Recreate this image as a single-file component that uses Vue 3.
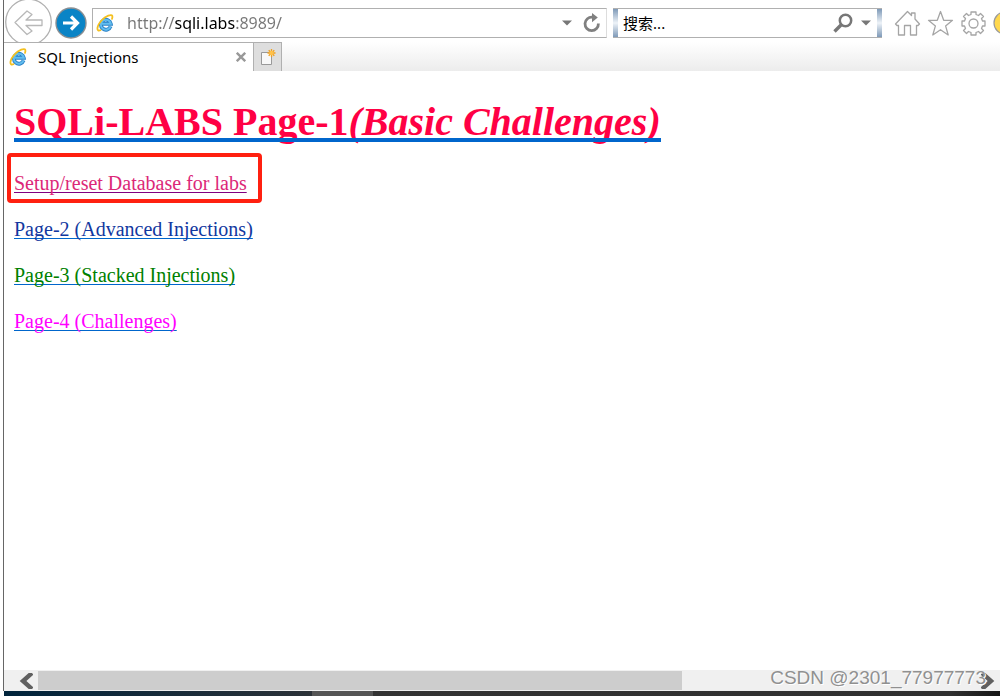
<template>
  <div class="browser">
    <header class="toolbar">
      <button class="nav nav--back" type="button" aria-label="Back">
        <svg width="48" height="48" viewBox="0 0 48 48">
          <circle cx="24.5" cy="23" r="22.8" fill="#fff" stroke="#b0b0b0" stroke-width="1.3" />
          <path
            d="M11 23.5 L23 12 L28 15.5 L22 21 H38 V26.5 H22 L28 32 L23 35.5 Z"
            fill="#fff"
            stroke="#b8b8b8"
            stroke-width="1.3"
            stroke-linejoin="round"
          />
        </svg>
      </button>
      <button class="nav" type="button" aria-label="Forward">
        <svg width="32" height="32" viewBox="0 0 32 32">
          <circle cx="16" cy="16" r="15" fill="#0a84c6" stroke="#8a8f93" stroke-width="1.4" />
          <path d="M8 16 H22 M16 9.5 L22.5 16 L16 22.5" fill="none" stroke="#fff" stroke-width="3.2" />
        </svg>
      </button>

      <form class="address" @submit.prevent>
        <svg class="ie" width="18" height="18" viewBox="0 0 18 18">
          <path :d="ie.letter" fill="none" stroke="#2a82c8" stroke-width="3.8" />
          <path :d="ie.letter" fill="none" stroke="#62bdee" stroke-width="2" />
          <path :d="ie.ring" fill="none" stroke="#f4c020" stroke-width="1.8" stroke-linecap="round" />
        </svg>
        <input v-model="url" class="address__input" type="text" aria-label="Address" />
        <button class="tool" type="button" aria-label="Show address history">
          <svg width="10" height="6" viewBox="0 0 10 6"><path d="M0 0.5 H10 L5 5.5 Z" fill="#777" /></svg>
        </button>
        <button class="tool tool--refresh" type="button" aria-label="Refresh">
          <svg width="18" height="20" viewBox="0 0 18 20">
            <path d="M15.4 10.5 A6.7 6.7 0 1 1 9.5 4.2" fill="none" stroke="#808080" stroke-width="2.8" />
            <path d="M9 0 L14.8 4.6 L9 9.2 Z" fill="#808080" />
          </svg>
        </button>
      </form>

      <form class="search" @submit.prevent>
        <input v-model="query" class="search__input" type="text" placeholder="搜索..." aria-label="搜索" />
        <button class="tool" type="submit" aria-label="Search">
          <svg width="20" height="20" viewBox="0 0 20 20">
            <circle cx="12.5" cy="7.5" r="5.7" fill="none" stroke="#777" stroke-width="2.5" />
            <path d="M8.5 11.5 L1.5 18.5" stroke="#777" stroke-width="3.4" />
          </svg>
        </button>
        <button class="tool tool--engines" type="button" aria-label="Search providers">
          <svg width="10" height="6" viewBox="0 0 10 6"><path d="M0 0.5 H10 L5 5.5 Z" fill="#777" /></svg>
        </button>
      </form>

      <nav class="commands">
        <button v-for="icon in icons" :key="icon.name" class="tool" type="button" :aria-label="icon.name">
          <svg width="27" height="27" viewBox="0 0 27 27">
            <path :d="icon.path" fill="#fff" stroke="#a5a5a5" stroke-width="1.3" stroke-linejoin="round" />
          </svg>
        </button>
        <button class="tool" type="button" aria-label="Feedback">
          <svg width="24" height="24" viewBox="0 0 24 24">
            <circle cx="12" cy="12" r="11" fill="#ffd84e" stroke="#9a9a9a" stroke-width="1.2" />
          </svg>
        </button>
      </nav>
    </header>

    <div class="tabs">
      <div class="tab">
        <svg class="ie" width="18" height="18" viewBox="0 0 18 18">
          <path :d="ie.letter" fill="none" stroke="#2a82c8" stroke-width="3.8" />
          <path :d="ie.letter" fill="none" stroke="#62bdee" stroke-width="2" />
          <path :d="ie.ring" fill="none" stroke="#f4c020" stroke-width="1.8" stroke-linecap="round" />
        </svg>
        <span class="tab__title">SQL Injections</span>
        <button class="tool" type="button" aria-label="Close tab">
          <svg width="10" height="10" viewBox="0 0 10 10">
            <path d="M0.8 0.8 L9.2 9.2 M9.2 0.8 L0.8 9.2" stroke="#999" stroke-width="2.4" />
          </svg>
        </button>
      </div>
      <button class="new-tab" type="button" aria-label="New tab">
        <svg width="16" height="16" viewBox="0 0 16 16">
          <path d="M1.5 3.5 H11.5 V15.5 H1.5 Z" fill="#f8f8f8" stroke="#999" />
          <path
            d="M11.5 0 V8 M7.5 4 H15.5 M8.7 1.2 L14.3 6.8 M14.3 1.2 L8.7 6.8"
            stroke="#f0a020"
            stroke-width="1.3"
          />
          <circle cx="11.5" cy="4" r="2.2" fill="#ffc14a" />
        </svg>
      </button>
    </div>

    <main class="page">
      <h1 class="page__heading">
        <a class="page__title" href="#">SQLi-LABS Page-1<i>(Basic Challenges)</i></a>
      </h1>
      <ul class="links">
        <li v-for="link in links" :key="link.tone" class="links__item" :class="{ 'links__item--marked': link.marked }">
          <a class="link" :class="`link--${link.tone}`" href="#">{{ link.label }}</a>
        </li>
      </ul>
    </main>

    <div class="scrollbar">
      <button class="scrollbar__arrow" type="button" aria-label="Scroll left">
        <svg width="14" height="16" viewBox="0 0 14 16">
          <path d="M13 0 L4 8 L13 16" fill="none" stroke="#606060" stroke-width="4.4" />
        </svg>
      </button>
      <div class="scrollbar__track">
        <div class="scrollbar__thumb" :style="{ width: `${thumb}%` }"></div>
      </div>
      <button class="scrollbar__arrow scrollbar__arrow--right" type="button" aria-label="Scroll right">
        <svg width="14" height="16" viewBox="0 0 14 16">
          <path d="M1 0 L10 8 L1 16" fill="none" stroke="#606060" stroke-width="4.4" />
        </svg>
      </button>
      <span class="watermark">CSDN @2301_77977773</span>
    </div>
    <div class="taskbar"></div>
  </div>
</template>

<script setup>
import { computed, ref } from 'vue'

const url = ref('http://sqli.labs:8989/')
const query = ref('')

const view = ref({ visible: 996, content: 1436 })
const thumb = computed(() => (view.value.visible / view.value.content) * 100)

const ie = {
  letter: 'M14.6 12.4 A5 5 0 1 1 14.8 9.8 H6',
  ring: 'M4.5 16.2 C0 18 0.5 12 5.5 6.5 C10 1.8 15.5 -0.2 16.3 1.8 C16.6 2.8 16.4 3.8 16 4.8',
}

const icons = [
  {
    name: 'Home',
    path: 'M1.5 14 L13.5 1.5 L17.5 5.5 V3 H21 V9 L25.5 14 L24 15.5 H22.5 V25 H16.5 V15.5 H10.5 V25 H4.5 V15.5 H3 Z',
  },
  {
    name: 'Favorites',
    path: 'M13.5 1.5 L16.7 10.3 H25.5 L18.6 15.9 L21.2 25 L13.5 19.7 L5.8 25 L8.4 15.9 L1.5 10.3 H10.3 Z',
  },
  {
    name: 'Tools',
    path: 'M11 2 H16 V4.5 L18.5 5.5 L20.5 3.5 L23.5 6.5 L21.5 8.5 L22.5 11 H25 V16 H22.5 L21.5 18.5 L23.5 20.5 L20.5 23.5 L18.5 21.5 L16 22.5 V25 H11 V22.5 L8.5 21.5 L6.5 23.5 L3.5 20.5 L5.5 18.5 L4.5 16 H2 V11 H4.5 L5.5 8.5 L3.5 6.5 L6.5 3.5 L8.5 5.5 L11 4.5 Z M13.5 9 A4.5 4.5 0 1 0 13.5 18 A4.5 4.5 0 1 0 13.5 9 Z',
  },
]

const links = [
  { label: 'Setup/reset Database for labs', tone: 'setup', marked: true },
  { label: 'Page-2 (Advanced Injections)', tone: 'advanced' },
  { label: 'Page-3 (Stacked Injections)', tone: 'stacked' },
  { label: 'Page-4 (Challenges)', tone: 'challenges' },
]
</script>

<style>
body {
  margin: 0;
  background: #fff;
}
</style>

<style scoped>
.browser {
  display: flex;
  flex-direction: column;
  min-height: 100vh;
  padding-left: 3px;
  box-sizing: border-box;
  overflow: hidden;
  font-family: 'Noto Sans', 'Noto Sans CJK SC', sans-serif;
  color: #000;
}

button {
  padding: 0;
  border: 0;
  background: none;
}

svg {
  display: block;
}

.toolbar,
.tabs,
.page,
.scrollbar {
  border-left: 1px solid #666;
}

.toolbar {
  display: flex;
  align-items: center;
  height: 42px;
  padding-top: 4px;
  box-sizing: border-box;
}

.nav {
  flex: none;
  margin-right: 5px;
}

.nav--back {
  margin-right: 3px;
}

.address,
.search {
  display: flex;
  align-items: center;
  height: 30px;
  box-sizing: border-box;
  border: 1px solid #b0b0b0;
  background: #fff;
}

.address {
  flex: 1;
  min-width: 0;
  padding: 0 5px 0 3px;
  border-right-color: #ddd;
}

.ie {
  flex: none;
}

.address__input,
.search__input {
  flex: 1;
  min-width: 0;
  padding: 0;
  border: 0;
  outline: 0;
  font: 15px/24px 'Noto Sans', 'Noto Sans CJK SC', sans-serif;
}

.address__input {
  margin-left: 13px;
  background: linear-gradient(to right, #777 47px, #000 47px, #000 108px, #777 108px);
  background-clip: text;
  color: transparent;
  font-size: 16px;
}

.tool {
  display: flex;
  flex: none;
}

.tool--refresh {
  margin-left: 11px;
}

.tool--engines {
  margin: 0 7px 0 8px;
}

.search {
  flex: none;
  width: 27%;
  margin-left: 6px;
  border-right: 0;
  border-left: 0;
  background:
    linear-gradient(#7f9ab8, #eef3f8 50%, #7f9ab8) left / 5px 100% no-repeat,
    linear-gradient(#7f9ab8, #eef3f8 50%, #7f9ab8) right / 5px 100% no-repeat,
    #fff;
  padding: 0 4px 0 10px;
}

.search__input {
  background: transparent;
  color: #000;
}

.search__input::placeholder {
  color: #000;
  opacity: 1;
}

.commands {
  display: flex;
  align-items: center;
  gap: 6px;
  flex: none;
  width: 106px;
  margin-left: 12px;
  overflow: hidden;
}

.tabs {
  position: relative;
  display: flex;
  height: 29px;
  background: linear-gradient(#fff, #ececec);
}

.tab {
  display: flex;
  align-items: center;
  width: 249px;
  padding: 0 7px 0 5px;
  box-sizing: border-box;
  border-top: 1px solid #b0b0b0;
  background: #fff;
}

.tab__title {
  flex: 1;
  margin-left: 11px;
  font-size: 15px;
  line-height: 24px;
}

.new-tab {
  display: flex;
  align-items: center;
  justify-content: center;
  width: 29px;
  border: 1px solid #b0b0b0;
  border-bottom: 0;
  background: #dedede;
}

.page {
  flex: 1;
  padding: 28px 10px 0;
  font-family: 'Liberation Serif', serif;
}

.page__heading {
  margin: 0;
  font-size: 40px;
  line-height: 46px;
}

.page__title {
  position: relative;
  display: inline-block;
  color: #ff0044;
  text-decoration: none;
}

.page__title::after {
  content: '';
  position: absolute;
  right: 0;
  bottom: 3px;
  left: 0;
  height: 4px;
  background: #0066cc;
}

.links {
  display: flex;
  flex-direction: column;
  align-items: flex-start;
  gap: 22px;
  margin: 26px 0 0;
  padding: 0;
  list-style: none;
}

.links__item {
  position: relative;
  font-size: 20px;
  line-height: 24px;
}

.links__item--marked::before {
  content: '';
  position: absolute;
  inset: -18px -15px -8px -7px;
  border: 4px solid #ff2010;
  border-radius: 4px;
  pointer-events: none;
}

.link {
  text-decoration-line: underline;
  text-decoration-color: #0066cc;
  text-decoration-thickness: 1px;
  text-decoration-skip-ink: none;
  text-underline-offset: 2px;
}

.link--setup {
  color: #dc2878;
  text-decoration-color: #800080;
}

.link--advanced {
  color: #1238a0;
}

.link--stacked {
  color: #008000;
}

.link--challenges {
  color: #ff00ff;
}

.scrollbar {
  position: relative;
  display: flex;
  align-items: center;
  height: 21px;
  background: #f0f0f0;
}

.scrollbar__arrow {
  display: flex;
  flex: none;
  justify-content: flex-end;
  width: 29px;
  margin-right: 5px;
}

.scrollbar__track {
  flex: 1;
}

.scrollbar__thumb {
  height: 19px;
  background: #cdcdcd;
}

.watermark {
  position: absolute;
  right: 14px;
  bottom: 2px;
  color: #909090;
  font: 19px/22px 'Liberation Sans', sans-serif;
  text-shadow: 1px 1px 0 #fff;
}

.taskbar {
  height: 5px;
  margin-left: 1px;
  background: linear-gradient(
    to right,
    #00243c,
    #2c3238 308px,
    #555 308px,
    #555 369px,
    #333 369px,
    #303030 95%,
    #151515
  );
}
</style>
